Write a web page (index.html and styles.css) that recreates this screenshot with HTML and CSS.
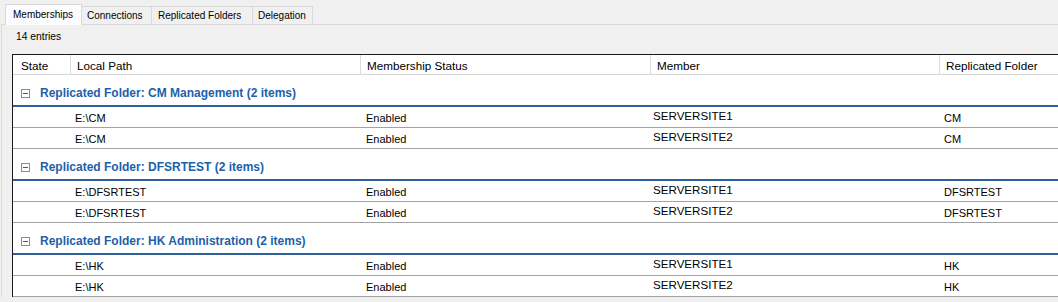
FILE: index.html
```html
<!DOCTYPE html>
<html lang="en">
<head>
  <meta charset="UTF-8">
  <meta name="viewport" content="width=device-width, initial-scale=1.0">
  <title>Memberships</title>
  <link rel="stylesheet" href="styles.css">
</head>
<body>
  <div class="tabs">
    <div class="tab tab-memberships active">Memberships</div>
    <div class="tab tab-connections">Connections</div>
    <div class="tab tab-folders">Replicated Folders</div>
    <div class="tab tab-delegation">Delegation</div>
  </div>

  <div class="panel">
    <div class="count">14 entries</div>

    <div class="list">
      <div class="row head">
        <div class="cell c-state">State</div>
        <div class="cell c-path">Local Path</div>
        <div class="cell c-status">Membership Status</div>
        <div class="cell c-member">Member</div>
        <div class="cell c-folder">Replicated Folder</div>
      </div>

      <div class="group">
        <span class="toggle"></span>
        <span class="group-title">Replicated Folder: CM Management (2 items)</span>
      </div>
      <div class="row">
        <div class="cell c-state"></div>
        <div class="cell c-path">E:\CM</div>
        <div class="cell c-status">Enabled</div>
        <div class="cell c-member">SERVERSITE1</div>
        <div class="cell c-folder">CM</div>
      </div>
      <div class="row">
        <div class="cell c-state"></div>
        <div class="cell c-path">E:\CM</div>
        <div class="cell c-status">Enabled</div>
        <div class="cell c-member">SERVERSITE2</div>
        <div class="cell c-folder">CM</div>
      </div>

      <div class="group">
        <span class="toggle"></span>
        <span class="group-title">Replicated Folder: DFSRTEST (2 items)</span>
      </div>
      <div class="row">
        <div class="cell c-state"></div>
        <div class="cell c-path">E:\DFSRTEST</div>
        <div class="cell c-status">Enabled</div>
        <div class="cell c-member">SERVERSITE1</div>
        <div class="cell c-folder">DFSRTEST</div>
      </div>
      <div class="row">
        <div class="cell c-state"></div>
        <div class="cell c-path">E:\DFSRTEST</div>
        <div class="cell c-status">Enabled</div>
        <div class="cell c-member">SERVERSITE2</div>
        <div class="cell c-folder">DFSRTEST</div>
      </div>

      <div class="group">
        <span class="toggle"></span>
        <span class="group-title">Replicated Folder: HK Administration (2 items)</span>
      </div>
      <div class="row">
        <div class="cell c-state"></div>
        <div class="cell c-path">E:\HK</div>
        <div class="cell c-status">Enabled</div>
        <div class="cell c-member">SERVERSITE1</div>
        <div class="cell c-folder">HK</div>
      </div>
      <div class="row">
        <div class="cell c-state"></div>
        <div class="cell c-path">E:\HK</div>
        <div class="cell c-status">Enabled</div>
        <div class="cell c-member">SERVERSITE2</div>
        <div class="cell c-folder">HK</div>
      </div>
    </div>
  </div>
</body>
</html>
```

FILE: styles.css
```css
body {
  font-family: 'Liberation Sans', Arial, sans-serif;
  font-size: 11px;
  margin: 0;
  background: #f0f0f0;
  color: #000;
  height: 302px;
  overflow: hidden;
}

/* tab strip */
.tabs {
  display: flex;
  align-items: flex-end;
  height: 24px;
  padding-left: 5px;
  box-sizing: border-box;
  font-size: 10px;
}

.tab {
  box-sizing: border-box;
  height: 18px;
  line-height: 17px;
  padding-left: 5px;
  border: 1px solid #d9d9d9;
  border-bottom: none;
  background: #f0f0f0;
  white-space: nowrap;
  margin-left: -1px;
}

.tab.active {
  height: 21px;
  line-height: 14px;
  padding-top: 3px;
  padding-left: 7px;
  margin-left: 0;
  margin-bottom: -1px;
  background: #fcfcfc;
  position: relative;
  z-index: 1;
}

.tab-memberships { width: 77px; }
.tab-connections { width: 71px; }
.tab-folders { width: 102px; padding-left: 6px; }
.tab-delegation { width: 61px; }

/* tab page */
.panel {
  margin-left: 1px;
  border-left: 1px solid #d9d9d9;
  border-top: 1px solid #d9d9d9;
  display: flex;
  flex-direction: column;
}

.count {
  padding: 5px 0 0 14px;
  line-height: 14px;
  height: 29px;
  box-sizing: border-box;
  font-size: 10.3px;
}

.list {
  margin-left: 10px;
  background: #fff;
  border-top: 1px solid #1a1a1a;
  border-left: 1px solid #1a1a1a;
}

.row {
  display: grid;
  grid-template-columns: 58px 290px 290px 289px 1fr;
  height: 21px;
  border-bottom: 1px solid #a3a3a3;
  box-sizing: border-box;
}

.cell {
  line-height: 20px;
  padding-top: 1px;
  white-space: nowrap;
  box-sizing: border-box;
}

.row .c-path { padding-left: 4px; }
.row .c-status { padding-left: 5px; }
.row .c-member {
  padding-left: 2px;
  padding-top: 0;
  line-height: 17px;
  font-size: 11.6px;
}
.row .c-folder { padding-left: 4px; }

.row.head {
  height: 20px;
  border-bottom: 1px solid #d5d5d5;
}

.head .cell {
  line-height: 19px;
  padding-top: 1px;
  padding-left: 6px;
  font-size: 11.7px;
  border-right: 1px solid #dcdcdc;
}

.head .c-state { padding-left: 8px; }
.head .c-folder { border-right: none; }

/* group header */
.group {
  height: 32px;
  box-sizing: border-box;
  border-bottom: 2px solid #2c619c;
  display: flex;
  align-items: center;
  padding: 6px 0 0 8px;
  gap: 10px;
}

.toggle {
  width: 9px;
  height: 9px;
  box-sizing: border-box;
  border: 1px solid #8c8c8c;
  position: relative;
}

.toggle::after {
  content: "";
  position: absolute;
  left: 1px;
  right: 1px;
  top: 3px;
  height: 1px;
  background: #555;
}

.group-title {
  color: #1e5faa;
  font-weight: bold;
  font-size: 12px;
  line-height: 14px;
}
```
